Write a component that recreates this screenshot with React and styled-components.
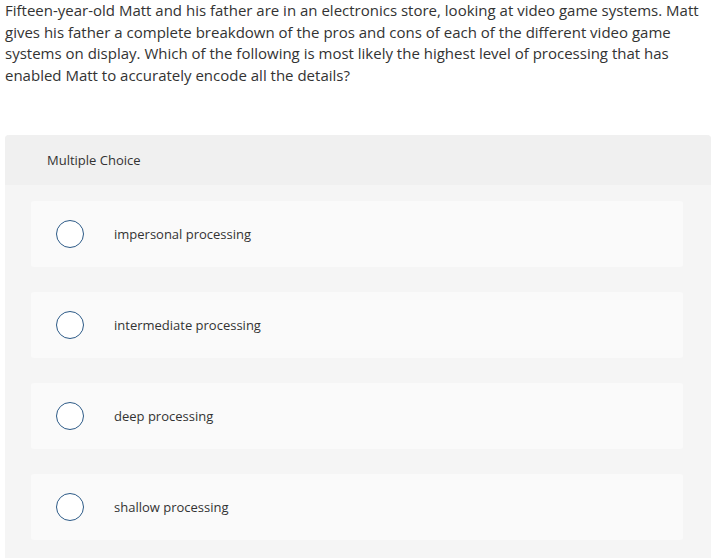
import React from 'react';
import styled, {createGlobalStyle} from 'styled-components';

const GlobalStyle = createGlobalStyle`
  body {
    margin: 0;
    background: #fff;
    font-family: "Open Sans", Lato, sans-serif;
    color: #333;
  }
`;

const choices = [
    'impersonal processing',
    'intermediate processing',
    'deep processing',
    'shallow processing',
];

const App = () => {
    return (
        <Page>
            <GlobalStyle/>
            <Question>
                Fifteen-year-old Matt and his father are in an electronics store, looking at video game systems. Matt
                gives his father a complete breakdown of the pros and cons of each of the different video game
                systems on display. Which of the following is most likely the highest level of processing that has
                enabled Matt to accurately encode all the details?
            </Question>
            <Panel>
                <Header>Multiple Choice</Header>
                <Options>
                    {choices.map((c) => (
                        <Option key={c}>
                            <Radio/>
                            <Label>{c}</Label>
                        </Option>
                    ))}
                </Options>
            </Panel>
        </Page>
    )
}

const Page = styled.div`
  padding: 0 17px 0 5px;
`;

const Question = styled.p`
  margin: 0;
  font-size: 15px;
  line-height: 21.5px;
  color: #333;
  max-width: 700px;
`;

const Panel = styled.div`
  margin-top: 49px;
  background: #f5f5f5;
  border-radius: 4px 4px 0 0;
  overflow: hidden;
  min-height: 440px;
`;

const Header = styled.div`
  height: 50px;
  display: flex;
  align-items: center;
  padding-left: 42px;
  background: #f0f0f0;
  font-size: 13px;
  color: #333;
`;

const Options = styled.div`
  display: flex;
  flex-direction: column;
  gap: 25px;
  padding: 16px 28px 0 26px;
`;

const Option = styled.div`
  height: 66px;
  display: flex;
  align-items: center;
  background: #fafafa;
  border-radius: 3px;
  padding-left: 25px;
`;

const Radio = styled.span`
  width: 26px;
  height: 26px;
  border: 1.5px solid #2c5a87;
  border-radius: 50%;
  background: #fff;
  flex-shrink: 0;
`;

const Label = styled.span`
  margin-left: 30px;
  font-size: 13px;
  color: #333;
`;

export default App;
